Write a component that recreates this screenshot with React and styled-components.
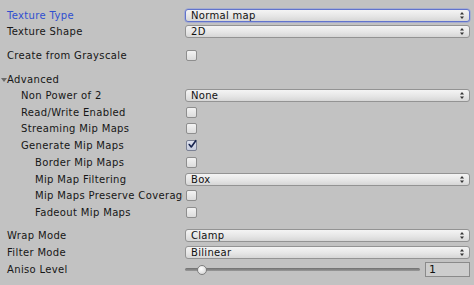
import React from 'react';
import styled, { createGlobalStyle } from 'styled-components';

const GlobalStyle = createGlobalStyle`
  html, body {
    margin: 0;
    padding: 0;
    background: #c2c2c2;
  }
  body {
    font-family: "DejaVu Sans", Verdana, sans-serif;
    font-size: 10px;
    color: #111;
  }
`;

const Panel = styled.div`
  width: 474px;
  height: 285px;
  box-sizing: border-box;
  padding: 7px 4px 0 0;
  display: flex;
  flex-direction: column;
  overflow: hidden;
`;

const Row = styled.div`
  display: flex;
  align-items: center;
  height: ${(p) => p.$h || 16.75}px;
  margin-top: ${(p) => p.$space || 0}px;
`;

const Label = styled.div`
  width: ${(p) => 183 - 7 - (p.$indent || 0) * 14}px;
  padding-left: ${(p) => 7 + (p.$indent || 0) * 14}px;
  margin-right: 2px;
  flex-shrink: 0;
  white-space: nowrap;
  overflow: hidden;
  color: ${(p) => (p.$active ? '#2f4fd0' : '#161616')};
  position: relative;
  letter-spacing: 0.35px;
`;

const Foldout = styled.span`
  position: absolute;
  left: 1px;
  top: 4px;
  width: 0;
  height: 0;
  border-left: 3px solid transparent;
  border-right: 3px solid transparent;
  border-top: 4px solid #6a6a6a;
`;

const Field = styled.div`
  flex: 1;
  display: flex;
  align-items: center;
`;

const Dropdown = styled.div`
  flex: 1;
  height: 13px;
  box-sizing: border-box;
  border: 1px solid ${(p) => (p.$focused ? '#6173cc' : '#939393')};
  box-shadow: ${(p) => (p.$focused ? '0 0 0 0.5px #8a98dc' : 'none')};
  border-radius: 3px;
  background: linear-gradient(#f4f4f4, #e6e6e6 55%, #d6d6d6);
  display: flex;
  align-items: center;
  justify-content: space-between;
  padding: 0 5px 0 5px;
  font-size: 10px;
  color: #111;
  letter-spacing: 0.3px;
`;

const Arrows = styled.svg`
  width: 4px;
  height: 7px;
  flex-shrink: 0;
`;

const Box = styled.div`
  width: 11px;
  height: 11px;
  box-sizing: border-box;
  margin-left: 1px;
  border: 1px solid #8e8e8e;
  border-radius: 2px;
  background: linear-gradient(#f3f3f3, #dcdcdc);
  display: flex;
  align-items: center;
  justify-content: center;
  ${(p) => p.$checked && 'background: linear-gradient(#dfe3ef, #c5cbdc); border-color: #7b8194;'}
`;

const Slider = styled.div`
  flex: 1;
  height: 12px;
  position: relative;
  display: flex;
  align-items: center;
`;

const Track = styled.div`
  flex: 1;
  height: 3px;
  border-radius: 2px;
  background: linear-gradient(#6f6f6f, #9a9a9a);
`;

const Thumb = styled.div`
  position: absolute;
  left: 12px;
  top: 1px;
  width: 10px;
  height: 10px;
  box-sizing: border-box;
  border-radius: 50%;
  border: 1px solid #7e7e7e;
  background: radial-gradient(circle at 40% 35%, #ffffff, #e2e2e2 60%, #c9c9c9);
`;

const NumberBox = styled.div`
  width: 45px;
  height: 15px;
  margin-left: 5px;
  box-sizing: border-box;
  border: 1px solid #8a8a8a;
  background: #cdcdcd;
  padding-left: 3px;
  display: flex;
  align-items: center;
  font-size: 11px;
  color: #111;
`;

function ArrowIcon() {
  return (
    <Arrows viewBox="0 0 4 7">
      <path d="M2 0 L4 2.5 L0 2.5 Z" fill="#333" />
      <path d="M2 7 L4 4.5 L0 4.5 Z" fill="#333" />
    </Arrows>
  );
}

function Check() {
  return (
    <svg width="11" height="11" viewBox="0 0 11 11" style={{ position: 'relative', top: -1, left: 1 }}>
      <path d="M1.5 5.5 L4 8.5 L9.5 0.8" fill="none" stroke="#17244f" strokeWidth="2" strokeLinecap="round" strokeLinejoin="round" />
    </svg>
  );
}

function Select({ value, focused }) {
  return (
    <Field>
      <Dropdown $focused={focused}>
        <span>{value}</span>
        <ArrowIcon />
      </Dropdown>
    </Field>
  );
}

function Toggle({ checked }) {
  return (
    <Field>
      <Box $checked={checked}>{checked && <Check />}</Box>
    </Field>
  );
}

export default function App() {
  return (
    <>
      <GlobalStyle />
      <Panel>
        <Row $h={16}>
          <Label $active>Texture Type</Label>
          <Select value="Normal map" focused />
        </Row>
        <Row $h={16}>
          <Label>Texture Shape</Label>
          <Select value="2D" />
        </Row>
        <Row $h={16} $space={8}>
          <Label>Create from Grayscale</Label>
          <Toggle />
        </Row>
        <Row $h={16} $space={8}>
          <Label>
            <Foldout />
            Advanced
          </Label>
        </Row>
        <Row>
          <Label $indent={1}>Non Power of 2</Label>
          <Select value="None" />
        </Row>
        <Row>
          <Label $indent={1}>Read/Write Enabled</Label>
          <Toggle />
        </Row>
        <Row>
          <Label $indent={1}>Streaming Mip Maps</Label>
          <Toggle />
        </Row>
        <Row>
          <Label $indent={1}>Generate Mip Maps</Label>
          <Toggle checked />
        </Row>
        <Row>
          <Label $indent={2}>Border Mip Maps</Label>
          <Toggle />
        </Row>
        <Row>
          <Label $indent={2}>Mip Map Filtering</Label>
          <Select value="Box" />
        </Row>
        <Row>
          <Label $indent={2}>Mip Maps Preserve Coverage</Label>
          <Toggle />
        </Row>
        <Row>
          <Label $indent={2}>Fadeout Mip Maps</Label>
          <Toggle />
        </Row>
        <Row $h={17} $space={6}>
          <Label>Wrap Mode</Label>
          <Select value="Clamp" />
        </Row>
        <Row $h={17}>
          <Label>Filter Mode</Label>
          <Select value="Bilinear" />
        </Row>
        <Row $h={17}>
          <Label>Aniso Level</Label>
          <Field>
            <Slider>
              <Track />
              <Thumb />
            </Slider>
            <NumberBox>1</NumberBox>
          </Field>
        </Row>
      </Panel>
    </>
  );
}
